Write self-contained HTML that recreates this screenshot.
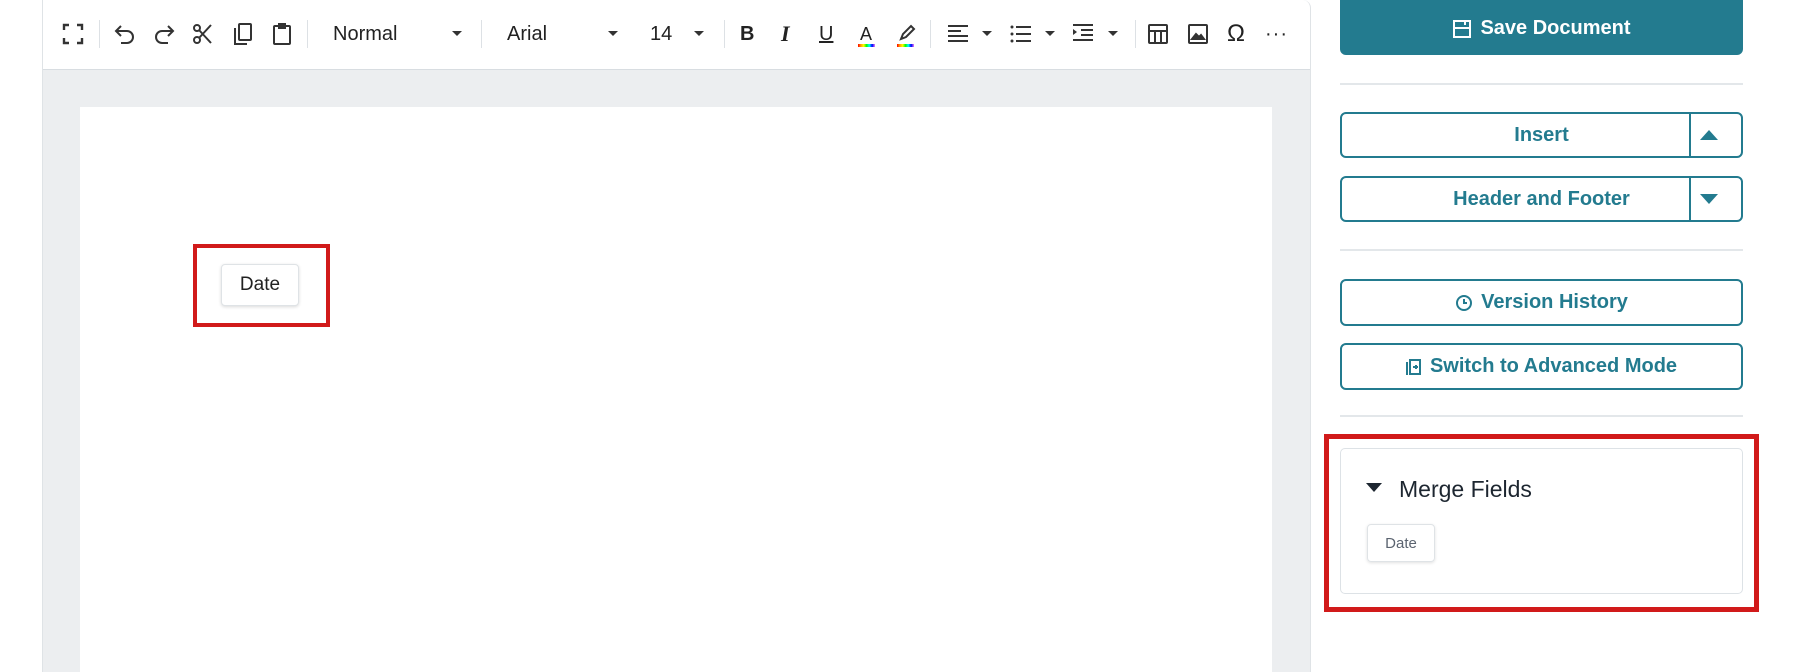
<!DOCTYPE html>
<html><head><meta charset="utf-8"><style>
*{margin:0;padding:0;box-sizing:border-box}
body{width:1800px;height:672px;background:#fff;position:relative;overflow:hidden;font-family:"Liberation Sans",Arial,sans-serif;color:#222}
.a{position:absolute}
.ti{position:absolute;top:22px;width:24px;height:24px;color:#333}
.sep{position:absolute;top:20px;width:1px;height:28px;background:#dde1e5}
.tt{position:absolute;top:22px;font-size:20px;color:#222;line-height:24px}
.car{position:absolute;top:31px;width:0;height:0;border-left:5px solid transparent;border-right:5px solid transparent;border-top:5px solid #333}
.btn{position:absolute;left:1340px;width:403px;border:2px solid #237b8f;border-radius:6px;color:#237b8f;font-weight:bold;font-size:20px;display:flex;align-items:center;justify-content:center;background:#fff}
.div{position:absolute;left:1340px;width:403px;height:2px;background:#e3e7ea}
</style></head><body>
<div class="a" style="left:42px;top:0;width:1269px;height:672px;border-left:1px solid #dfe3e6;border-right:1px solid #dfe3e6;border-top-right-radius:8px"></div>
<div class="a" style="left:43px;top:69px;width:1267px;height:603px;background:#eceef0;border-top:1px solid #d8dde1"></div>
<div class="a" style="left:80px;top:107px;width:1192px;height:565px;background:#fff"></div>

<svg class="ti" style="left:61px" viewBox="0 0 24 24" fill="none" stroke="#333" stroke-width="2.4"><path d="M3 8V3h5M16 3h5v5M21 16v5h-5M8 21H3v-5"/></svg>
<div class="sep" style="left:99px"></div>
<svg class="ti" style="left:113px" viewBox="0 0 24 24" fill="none" stroke="#333" stroke-width="2"><path d="M8 4L3 9l5 5M3 9h11a6 6 0 010 12H8"/></svg>
<svg class="ti" style="left:152px" viewBox="0 0 24 24" fill="none" stroke="#333" stroke-width="2"><path d="M16 4l5 5-5 5M21 9H10a6 6 0 000 12h6"/></svg>
<svg class="ti" style="left:191px" viewBox="0 0 24 24" fill="none" stroke="#333" stroke-width="2"><circle cx="6" cy="18" r="3"/><circle cx="6" cy="6" r="3"/><path d="M8 8l12 13M8 16L20 3"/></svg>
<svg class="ti" style="left:231px" viewBox="0 0 24 24" fill="none" stroke="#333" stroke-width="2"><rect x="8" y="2" width="12" height="16" rx="1"/><path d="M4 6v16h12"/></svg>
<svg class="ti" style="left:270px" viewBox="0 0 24 24" fill="none" stroke="#333" stroke-width="2"><rect x="4" y="4" width="16" height="18" rx="1"/><rect x="9" y="2" width="6" height="4" fill="#333"/></svg>
<div class="sep" style="left:307px"></div>
<div class="tt" style="left:333px">Normal</div>
<div class="car" style="left:452px"></div>
<div class="sep" style="left:481px"></div>
<div class="tt" style="left:507px">Arial</div>
<div class="car" style="left:608px"></div>
<div class="tt" style="left:650px">14</div>
<div class="car" style="left:694px"></div>
<div class="sep" style="left:724px"></div>
<div class="tt" style="left:740px;font-weight:bold">B</div>
<div class="tt" style="left:781px;font-weight:bold;font-style:italic;font-family:'Liberation Serif',serif;font-size:22px">I</div>
<div class="tt" style="left:819px;text-decoration:underline">U</div>
<div class="tt" style="left:860px;font-size:18px">A</div>
<div class="a" style="left:858px;top:44px;width:17px;height:3px;background:linear-gradient(90deg,red,orange,yellow,lime,cyan,blue,violet)"></div>
<svg class="ti" style="left:895px" viewBox="0 0 24 24" fill="none" stroke="#333" stroke-width="2"><path d="M6 17l2-5 8-8 3 3-8 8z"/></svg>
<div class="a" style="left:897px;top:44px;width:17px;height:3px;background:linear-gradient(90deg,red,orange,yellow,lime,cyan,blue,violet)"></div>
<div class="sep" style="left:930px"></div>
<svg class="ti" style="left:946px" viewBox="0 0 24 24" fill="#333"><rect x="2" y="3" width="20" height="2"/><rect x="2" y="8" width="13" height="2"/><rect x="2" y="13" width="20" height="2"/><rect x="2" y="18" width="20" height="2"/></svg>
<div class="car" style="left:982px"></div>
<svg class="ti" style="left:1009px" viewBox="0 0 24 24" fill="#333"><circle cx="3" cy="5" r="1.5"/><circle cx="3" cy="12" r="1.5"/><circle cx="3" cy="19" r="1.5"/><rect x="7" y="4" width="15" height="2"/><rect x="7" y="11" width="15" height="2"/><rect x="7" y="18" width="15" height="2"/></svg>
<div class="car" style="left:1045px"></div>
<svg class="ti" style="left:1071px" viewBox="0 0 24 24" fill="#333"><rect x="2" y="2" width="20" height="2"/><rect x="10" y="7" width="12" height="2"/><rect x="10" y="12" width="12" height="2"/><rect x="2" y="17" width="20" height="2"/><path d="M2 7l4 3-4 3z"/></svg>
<div class="car" style="left:1108px"></div>
<div class="sep" style="left:1135px"></div>
<svg class="ti" style="left:1146px" viewBox="0 0 24 24" fill="none" stroke="#333" stroke-width="2"><rect x="3" y="3" width="18" height="18" rx="1"/><path d="M3 9h18M9 9v12M15 9v12"/></svg>
<svg class="ti" style="left:1186px" viewBox="0 0 24 24" fill="none" stroke="#333" stroke-width="2"><rect x="3" y="3" width="18" height="18" rx="1"/><path d="M6 17l4-5 3 3 2-2 3 4z" fill="#333"/></svg>
<div class="tt" style="left:1227px;font-size:24px">Ω</div>
<div class="tt" style="left:1265px;font-size:20px;letter-spacing:1px">···</div>

<div class="a" style="left:193px;top:244px;width:137px;height:83px;border:4px solid #d11a1a"></div>
<div class="a" style="left:221px;top:264px;width:78px;height:42px;border:1px solid #dfe3e6;border-radius:4px;box-shadow:0 1px 3px rgba(0,0,0,.15);font-size:19px;display:flex;align-items:center;justify-content:center;background:#fff">Date</div>

<div class="btn" style="top:0;height:55px;background:#237b8f;color:#fff;border:none;border-radius:0 0 6px 6px;padding-top:2px">
<svg width="20" height="20" viewBox="0 0 20 20" fill="none" stroke="#fff" stroke-width="2" style="margin-right:8px"><rect x="2" y="2" width="16" height="16"/><path d="M2 9h16M13 2v4"/></svg>Save Document</div>
<div class="div" style="top:83px"></div>
<div class="btn" style="top:112px;height:46px">Insert</div>
<div class="a" style="left:1689px;top:112px;width:2px;height:46px;background:#237b8f"></div>
<div class="a" style="left:1700px;top:130px;border-left:9px solid transparent;border-right:9px solid transparent;border-bottom:10px solid #237b8f"></div>
<div class="btn" style="top:176px;height:46px">Header and Footer</div>
<div class="a" style="left:1689px;top:176px;width:2px;height:46px;background:#237b8f"></div>
<div class="a" style="left:1700px;top:194px;border-left:9px solid transparent;border-right:9px solid transparent;border-top:10px solid #237b8f"></div>
<div class="div" style="top:249px"></div>
<div class="btn" style="top:279px;height:47px"><svg width="18" height="18" viewBox="0 0 18 18" fill="none" stroke="#237b8f" stroke-width="2" style="margin-right:8px"><circle cx="9" cy="9" r="7"/><path d="M9 5v4h3"/></svg>Version History</div>
<div class="btn" style="top:343px;height:47px"><svg width="16" height="18" viewBox="0 0 16 18" fill="none" stroke="#237b8f" stroke-width="2" style="margin-right:8px"><rect x="4" y="2" width="10" height="14"/><path d="M1 4v13M7 9h5M10 7v4"/></svg>Switch to Advanced Mode</div>
<div class="div" style="top:415px"></div>

<div class="a" style="left:1324px;top:434px;width:435px;height:178px;border:5px solid #d11a1a"></div>
<div class="a" style="left:1340px;top:448px;width:403px;height:146px;border:1px solid #dde2e6;border-radius:5px"></div>
<div class="a" style="left:1366px;top:483px;border-left:8px solid transparent;border-right:8px solid transparent;border-top:9px solid #1d2630"></div>
<div class="a" style="left:1399px;top:476px;font-size:23px;color:#1d2630">Merge Fields</div>
<div class="a" style="left:1367px;top:524px;width:68px;height:38px;border:1px solid #dfe3e6;border-radius:4px;box-shadow:0 1px 3px rgba(0,0,0,.12);font-size:15px;color:#5b6470;display:flex;align-items:center;justify-content:center">Date</div>
</body></html>
